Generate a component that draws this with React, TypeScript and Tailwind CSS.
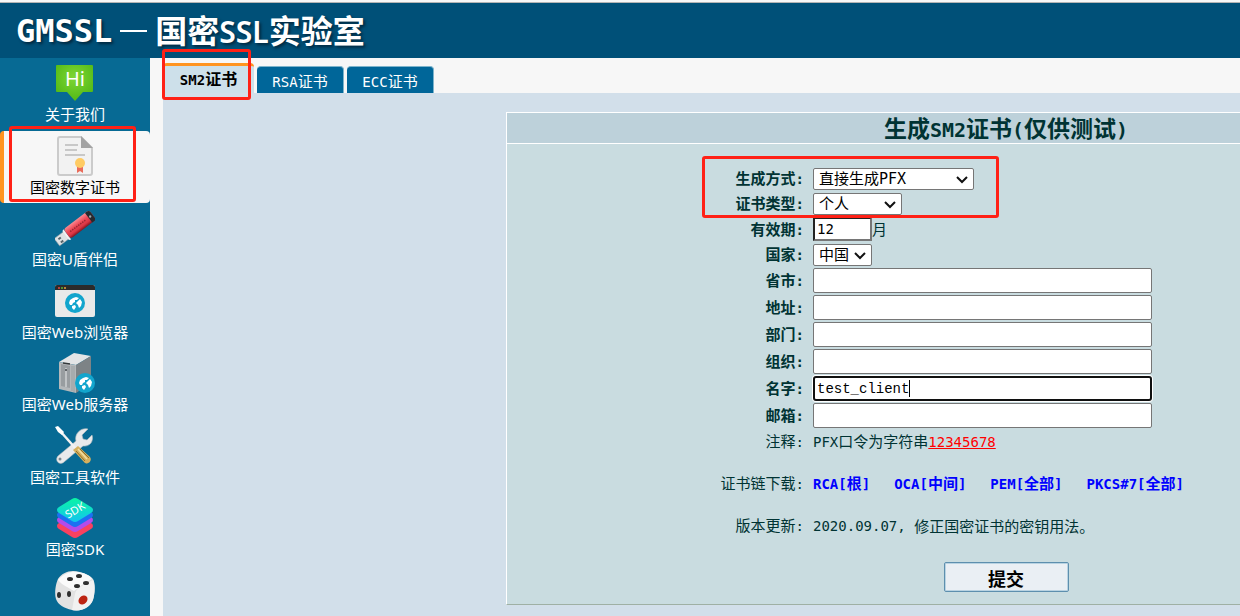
import React from 'react';

const MONO = /([\x20-\x7e]+)/;

// Latin runs use the monospace face, one step smaller than the Chinese around them
const Mixed = ({ text, latin = 'text-[14px]' }: { text: string; latin?: string }) => (
  <>
    {text.split(MONO).map((part, i) =>
      i % 2 === 1 ? (
        <span key={i} className={`whitespace-pre font-['DejaVu_Sans_Mono',monospace] ${latin}`}>
          {part}
        </span>
      ) : (
        part
      )
    )}
  </>
);

const Globe = ({ cx, cy, r }: { cx: number; cy: number; r: number }) => (
  <g transform={`translate(${cx} ${cy}) scale(${r / 10})`}>
    <circle r="10" fill="#12a5cd" />
    <path d="M-6 0 L-5 -3 L-2 -5 L1 -6 L4 -5 L2 -3 L0 -3 L0 -1 L-2 0 L-3 2 L-5 2 Z" fill="#fff" />
    <path d="M-3 3 L0 2 L1 4 L-1 7 L-3 5 Z" fill="#fff" />
    <path d="M3 -2 L5 -4 L7 -1 L6 3 L4 5 L3 2 L1 0 Z" fill="#fff" />
  </g>
);

const HiIcon = () => (
  <svg width="40" height="40" viewBox="0 0 40 40">
    <defs>
      <radialGradient id="hi" cx="50%" cy="35%" r="70%">
        <stop offset="0" stopColor="#7fd735" />
        <stop offset="1" stopColor="#4fb613" />
      </radialGradient>
    </defs>
    <path d="M2 2h35a1 1 0 0 1 1 1v25a1 1 0 0 1-1 1h-9l-8 9-8-9H2a1 1 0 0 1-1-1V3a1 1 0 0 1 1-1z" fill="url(#hi)" />
    <text x="20" y="23" textAnchor="middle" fontSize="20" fill="#fff" fontFamily="Noto Sans, sans-serif">Hi</text>
  </svg>
);

const CertIcon = () => (
  <svg width="40" height="40" viewBox="0 0 40 40">
    <path d="M5 1h21l11 11v25a2 2 0 0 1-2 2H5a2 2 0 0 1-2-2V3a2 2 0 0 1 2-2z" fill="#f2f2f2" stroke="#cbcbcb" strokeWidth="2" />
    <path d="M26 0l12 12H26z" fill="#a3a3a3" />
    <path d="M10 9h13M10 14h12M10 19h20" stroke="#c8c8c8" strokeWidth="2" />
    <path d="M22 29h6v8l-3-2-3 2z" fill="#ea6c5b" />
    <circle cx="25" cy="27" r="5" fill="#ffcb63" />
  </svg>
);

const UsbIcon = () => (
  <svg width="40" height="40" viewBox="0 0 40 40">
    <defs>
      <linearGradient id="usb" x1="0" y1="0" x2="0" y2="1">
        <stop offset="0" stopColor="#f98a92" />
        <stop offset="0.4" stopColor="#ee4a58" />
        <stop offset="0.75" stopColor="#d93543" />
        <stop offset="1" stopColor="#7d1620" />
      </linearGradient>
    </defs>
    <g transform="translate(20 20) rotate(-37)">
      <path d="M-23 -4h12v9h-12z" fill="#dfe3e5" stroke="#98a3a8" strokeWidth="0.6" />
      <rect x="-20" y="-2" width="3" height="2" fill="#59656b" />
      <rect x="-20" y="2" width="3" height="2" fill="#59656b" />
      <path d="M-12 -5l2-1v13l-2-1z" fill="#f2f2f2" />
      <rect x="-10" y="-6" width="32" height="12" rx="3" fill="url(#usb)" />
      <path d="M17 -6h2a3 3 0 0 1 3 3v6a3 3 0 0 1-3 3h-2z" fill="#262a2e" />
      <circle cx="19" cy="0" r="1.2" fill="#9aa6ad" />
      <path d="M-6 0h19" stroke="#9d2733" strokeWidth="1.500" strokeDasharray="1.500 1" />
    </g>
  </svg>
);

const BrowserIcon = () => (
  <svg width="40" height="40" viewBox="0 0 40 40">
    <rect x="0" y="4" width="40" height="32" rx="2" fill="#e9e9e9" />
    <path d="M2 4h36a2 2 0 0 1 2 2v3H0V6a2 2 0 0 1 2-2z" fill="#2b2b2b" />
    <circle cx="4" cy="7" r="1" fill="#e8473c" />
    <circle cx="7" cy="7" r="1" fill="#5cb531" />
    <circle cx="10" cy="7" r="1" fill="#e8a33c" />
    <Globe cx={20} cy={22} r={10} />
  </svg>
);

const ServerIcon = () => (
  <svg width="40" height="40" viewBox="0 0 40 40">
    <path d="M4 9L19 0l17 3-15 9z" fill="#e3e5e6" />
    <path d="M4 9l17 3v28L4 36z" fill="#b4b8ba" />
    <path d="M21 12L36 3v27L21 40z" fill="#7d8386" />
    <path d="M6 11l9 2v22l-9-2z" fill="#989da0" />
    <path d="M8 10l7 1" stroke="#35393b" strokeWidth="1.500" />
    <path d="M11 15v19" stroke="#e8eaeb" strokeWidth="1" />
    <circle cx="11" cy="17" r="1" fill="#3f4548" />
    <path d="M17 13v25M19 13v26" stroke="#90969a" strokeWidth="0.700" />
    <Globe cx={30} cy={30} r={10} />
  </svg>
);

const ToolsIcon = () => (
  <svg width="40" height="40" viewBox="0 0 40 40">
    <path d="M33 3l-6 6 1 4 4 1 5-5c2 6-2 12-9 11L9 36c-4 4-10-1-6-6l18-15C19 8 26 1 33 3z" fill="#e9eaeb" stroke="#b5bcc0" strokeWidth="0.600" />
    <circle cx="5" cy="33" r="1.500" fill="#7c8a91" />
    <path d="M6 6l16 18" stroke="#f2f2f2" strokeWidth="2.500" />
    <path d="M0 1l3-1 6 6-2 3-4-3z" fill="#fff" />
    <path d="M18 24l5-4 12 11c3 4-3 9-6 5z" fill="#d6b05d" />
    <path d="M25 23l9 9M21 25l9 10" stroke="#8c6c2b" strokeWidth="1" />
    <path d="M23 23l9 10" stroke="#f4dfa2" strokeWidth="1.500" />
  </svg>
);

const SdkIcon = () => (
  <svg width="40" height="40" viewBox="0 0 40 40">
    <defs>
      <linearGradient id="sdk" x1="0" y1="0" x2="0" y2="1">
        <stop offset="0" stopColor="#0af5a4" />
        <stop offset="1" stopColor="#12c4ef" />
      </linearGradient>
    </defs>
    <path d="M2 28q0-2 2-3l16-9 16 9q2 1 2 3t-2 3l-13 8q-3 2-6 0L4 31q-2-1-2-3z" fill="#f9415f" />
    <path d="M2 22q0-2 2-3l16-9 16 9q2 1 2 3t-2 3l-13 8q-3 2-6 0L4 25q-2-1-2-3z" fill="#b34bea" />
    <path d="M2 17q0-2 2-3l16-9 16 9q2 1 2 3t-2 3l-13 8q-3 2-6 0L4 20q-2-1-2-3z" fill="#1c70f2" />
    <path d="M2 12q0-2 2-3L17 1q3-2 6 0l13 8q2 1 2 3t-2 3l-13 8q-3 2-6 0L4 15q-2-1-2-3z" fill="url(#sdk)" />
    <text x="20" y="16" textAnchor="middle" fontSize="11" fill="#fff" transform="rotate(-31 20 12)" fontFamily="Noto Sans, sans-serif">SDK</text>
  </svg>
);

const DiceIcon = () => (
  <svg width="40" height="40" viewBox="0 0 40 40">
    <path d="M18 0c7 0 17 4 20 8 3 5 2 17-1 23-4 7-14 10-20 8C9 37 3 34 1 28-1 22 1 12 3 8 6 3 12 0 18 0z" fill="#e2e2e2" />
    <path d="M3 9c6-7 14-9 20-8 6 1 12 3 14 7-6 3-12 7-18 12C13 16 8 15 3 9z" fill="#fafafa" />
    <path d="M38 9c-8 4-17 8-18 14-1 5-2 11-3 16 10 2 18-3 21-10 2-7 2-16 0-20z" fill="#f1f1f1" />
    <g fill="#2f2f2f">
      <ellipse cx="15" cy="8" rx="3" ry="2" />
      <ellipse cx="24" cy="5" rx="3" ry="2" />
      <ellipse cx="22" cy="15" rx="3" ry="2" />
      <ellipse cx="31" cy="12" rx="3" ry="2" />
      <ellipse cx="4" cy="24" rx="2" ry="3" />
      <ellipse cx="14" cy="23" rx="2" ry="3" />
    </g>
    <ellipse cx="28" cy="29" rx="5" ry="4" fill="#bd2412" transform="rotate(-45 28 29)" />
  </svg>
);

const menu = [
  { label: '关于我们', icon: HiIcon },
  { label: '国密数字证书', icon: CertIcon, active: true },
  { label: '国密U盾伴侣', icon: UsbIcon },
  { label: '国密Web浏览器', icon: BrowserIcon },
  { label: '国密Web服务器', icon: ServerIcon },
  { label: '国密工具软件', icon: ToolsIcon },
  { label: '国密SDK', icon: SdkIcon },
  { label: '', icon: DiceIcon },
];

const textFields = [
  { id: 'province', label: '省市:' },
  { id: 'address', label: '地址:' },
  { id: 'department', label: '部门:' },
  { id: 'organization', label: '组织:' },
  { id: 'name', label: '名字:', value: 'test_client' },
  { id: 'email', label: '邮箱:' },
];

const downloads = ['RCA[根]', 'OCA[中间]', 'PEM[全部]', 'PKCS#7[全部]'];

const Highlight = ({ className }: { className: string }) => (
  <div className={`pointer-events-none absolute z-10 rounded-[3px] border-3 border-[#ff2116] ${className}`} />
);

const Row = ({ label, htmlFor, className = '', children }: {
  label: string;
  htmlFor?: string;
  className?: string;
  children: React.ReactNode;
}) => (
  <div className={`grid grid-cols-[297px_1fr] items-center gap-[9px] ${className}`}>
    {htmlFor ? (
      <label htmlFor={htmlFor} className="text-right font-bold">
        <Mixed text={label} />
      </label>
    ) : (
      <span className="text-right">
        <Mixed text={label} />
      </span>
    )}
    <div className="flex items-center">{children}</div>
  </div>
);

const Select = ({ id, option, className }: { id: string; option: string; className: string }) => (
  <div className={`relative ${className}`}>
    <select
      id={id}
      className="block h-[22px] w-full appearance-none rounded-[2px] border border-[#767676] bg-white pl-[5px] font-['DejaVu_Sans_Mono','Noto_Sans_CJK_SC',monospace] text-[15px] leading-5 text-black"
    >
      <option>{option}</option>
    </select>
    <svg className="pointer-events-none absolute top-2 right-1.5" width="12" height="8" viewBox="0 0 12 8">
      <path d="M1 1l5 5 5-5" fill="none" stroke="#111" strokeWidth="2" />
    </svg>
  </div>
);

const App = () => {
  return (
    <div className="flex h-screen flex-col overflow-hidden bg-[#f7f7f7] font-['Noto_Sans','Noto_Sans_CJK_SC',sans-serif] text-[15px]">
      {/* Header */}
      <header className="mt-0.5 flex h-14 shrink-0 items-center border-t border-[#b4b4b4] bg-[#005078] pl-4">
        <h1 className="flex items-center text-[32px] leading-[52px] font-bold text-white [text-shadow:2px_2px_3px_#00283f]">
          <span className="font-['DejaVu_Sans_Mono',monospace]">GMSSL</span>
          <span className="mx-2 w-[27px] border-t-2 border-white" />
          <span className="font-['Noto_Sans_CJK_SC',sans-serif]">
            国密<span className="font-['Noto_Sans',sans-serif] text-[30px] font-semibold">SSL</span>实验室
          </span>
        </h1>
      </header>

      <div className="flex min-h-0 flex-1">
        {/* Sidebar */}
        <aside className="w-[150px] shrink-0 overflow-hidden bg-[#076a94]">
          <nav className="grid h-[580px] auto-rows-fr">
            {menu.map(({ label, icon: Icon, active }, i) => (
              <a
                key={i}
                href="#"
                className={
                  active
                    ? 'relative flex flex-col items-center rounded-sm border-l-4 border-[#ff9420] bg-[#f7f7f7] pt-[5px] pr-1 text-black'
                    : 'flex flex-col items-center pt-[5px] text-white'
                }
              >
                <Icon />
                <span className="leading-[22px] whitespace-nowrap">{label}</span>
                {active && <Highlight className="-top-[5px] left-[5px] h-[76px] w-[127px]" />}
              </a>
            ))}
          </nav>
        </aside>

        {/* Content */}
        <main className="flex min-w-0 flex-1 flex-col pl-[13px]">
          <div className="relative flex h-[35px] shrink-0 items-end gap-[3px]">
            <button className="h-[30px] w-[91px] rounded-t-sm border-t-3 border-[#ff9420] bg-[#cde0ea] text-[16px] leading-6 font-bold text-black">
              <Mixed text="SM2证书" />
            </button>
            <button className="h-[27px] w-[87px] rounded-t-sm border-t border-r border-[#7db4cc] bg-[#006699] leading-7 text-white">
              <Mixed text="RSA证书" />
            </button>
            <button className="h-[27px] w-[87px] rounded-t-sm border-t border-r border-[#7db4cc] bg-[#006699] leading-7 text-white">
              <Mixed text="ECC证书" />
            </button>
            <Highlight className="-top-[9px] -left-px h-[51px] w-[89px]" />
          </div>

          <div className="flex-1 bg-[#d2dfea] pt-[19px] pl-[343px]">
            <form
              className="relative w-[1000px] border border-white border-b-[#9fb0a4] bg-[#c9dce0] pb-3 text-[#003333]"
              onSubmit={(e) => e.preventDefault()}
            >
              <h2 className="h-[31px] border-b border-white bg-[#bdd1da] text-center text-[23px] leading-[30px] font-bold">
                <Mixed text="生成SM2证书(仅供测试)" latin="text-[20px]" />
              </h2>

              <div className="pt-[23px] leading-[22px]">
                <Row label="生成方式:" htmlFor="mode" className="h-[22px] mb-[3px]">
                  <Select id="mode" option="直接生成PFX" className="w-[161px]" />
                </Row>
                <Row label="证书类型:" htmlFor="kind" className="h-[22px] mb-[3px]">
                  <Select id="kind" option="个人" className="w-[89px]" />
                </Row>
                <Row label="有效期:" htmlFor="months" className="h-6 mb-0.5">
                  <input
                    id="months"
                    defaultValue="12"
                    className="h-6 w-[59px] border-2 border-[#767676] border-t-[#222] border-l-[#222] bg-white px-0.5 font-['DejaVu_Sans_Mono',monospace] text-[14px] leading-5 text-black"
                  />
                  月
                </Row>
                <Row label="国家:" htmlFor="country" className="h-[22px] mb-[3px]">
                  <Select id="country" option="中国" className="w-[59px]" />
                </Row>
                {textFields.map(({ id, label, value }) => (
                  <Row key={id} label={label} htmlFor={id} className="h-[25px] mb-0.5">
                    <div className="relative w-[339px]">
                      <input
                        id={id}
                        defaultValue={value}
                        className={
                          value
                            ? "block h-[25px] w-full rounded-[3px] border-2 border-[#101010] bg-white px-0.5 font-['Liberation_Mono',monospace] text-[14px] leading-5 text-black ring-1 ring-white"
                            : "block h-[25px] w-full rounded-[2px] border border-[#767676] bg-white px-[3px] font-['Liberation_Mono',monospace] text-[14px] leading-5 text-black"
                        }
                      />
                      {value && <span className="absolute top-1 left-24 h-[17px] w-px bg-black" />}
                    </div>
                  </Row>
                ))}
                <Row label="注释:" className="h-[22px]">
                  <span>
                    <Mixed text="PFX口令为字符串" />
                    <a href="#" className="text-[#ff0000] underline">
                      <Mixed text="12345678" />
                    </a>
                  </span>
                </Row>
                <Row label="证书链下载:" className="mt-5 h-[22px]">
                  <div className="flex gap-6 font-bold text-[#0000ff]">
                    {downloads.map((item) => (
                      <a key={item} href="#">
                        <Mixed text={item} />
                      </a>
                    ))}
                  </div>
                </Row>
                <Row label="版本更新:" className="mt-5 h-[22px]">
                  <Mixed text="2020.09.07, 修正国密证书的密钥用法。" />
                </Row>
              </div>

              <button
                type="submit"
                className="mx-auto mt-[26px] block h-[30px] w-[125px] rounded-[2px] border border-[#5d8fae] bg-[#eaeff4] pt-1 text-[18px] leading-6 font-bold text-black shadow-[inset_0_0_0_1px_#b9d3e2]"
              >
                提交
              </button>

              <Highlight className="top-[43px] left-[195px] h-[62px] w-[297px]" />
            </form>
          </div>
        </main>
      </div>
    </div>
  );
};

export default App;
